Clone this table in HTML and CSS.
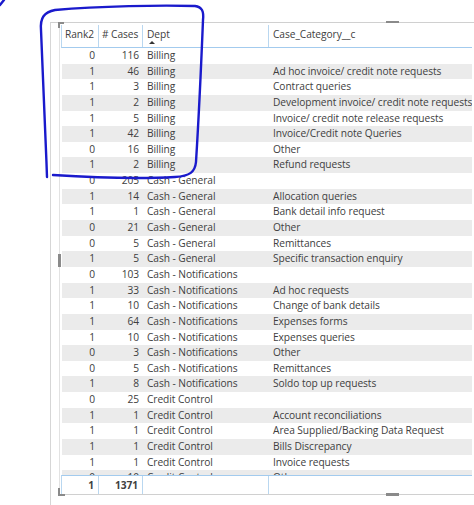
FILE: index.html
```html
<!DOCTYPE html>
<html>
<head>
<meta charset="utf-8">
<link rel="stylesheet" href="styles.css">
</head>
<body>
<div class="page">
  <div class="frame">
    <div class="visual">
      <span class="handle handle-tl"></span>
      <span class="handle handle-bl"></span>
      <span class="handle handle-ml"></span>
      <span class="handle handle-tm"></span>
      <span class="handle handle-bm"></span>
      <div class="table">
        <div class="row head">
          <div class="cell num">Rank2</div>
          <div class="cell num"># Cases</div>
          <div class="cell txt">Dept<span class="sort"></span></div>
          <div class="cell txt">Case_Category__c</div>
        </div>
        <div class="body">
          <div class="row"><div class="cell num">0</div><div class="cell num">116</div><div class="cell txt">Billing</div><div class="cell txt"></div></div>
          <div class="row alt"><div class="cell num">1</div><div class="cell num">46</div><div class="cell txt">Billing</div><div class="cell txt">Ad hoc invoice/ credit note requests</div></div>
          <div class="row"><div class="cell num">1</div><div class="cell num">3</div><div class="cell txt">Billing</div><div class="cell txt">Contract queries</div></div>
          <div class="row alt"><div class="cell num">1</div><div class="cell num">2</div><div class="cell txt">Billing</div><div class="cell txt">Development invoice/ credit note requests</div></div>
          <div class="row"><div class="cell num">1</div><div class="cell num">5</div><div class="cell txt">Billing</div><div class="cell txt">Invoice/ credit note release requests</div></div>
          <div class="row alt"><div class="cell num">1</div><div class="cell num">42</div><div class="cell txt">Billing</div><div class="cell txt">Invoice/Credit note Queries</div></div>
          <div class="row"><div class="cell num">0</div><div class="cell num">16</div><div class="cell txt">Billing</div><div class="cell txt">Other</div></div>
          <div class="row alt"><div class="cell num">1</div><div class="cell num">2</div><div class="cell txt">Billing</div><div class="cell txt">Refund requests</div></div>
          <div class="row"><div class="cell num">0</div><div class="cell num">205</div><div class="cell txt">Cash - General</div><div class="cell txt"></div></div>
          <div class="row alt"><div class="cell num">1</div><div class="cell num">14</div><div class="cell txt">Cash - General</div><div class="cell txt">Allocation queries</div></div>
          <div class="row"><div class="cell num">1</div><div class="cell num">1</div><div class="cell txt">Cash - General</div><div class="cell txt">Bank detail info request</div></div>
          <div class="row alt"><div class="cell num">0</div><div class="cell num">21</div><div class="cell txt">Cash - General</div><div class="cell txt">Other</div></div>
          <div class="row"><div class="cell num">0</div><div class="cell num">5</div><div class="cell txt">Cash - General</div><div class="cell txt">Remittances</div></div>
          <div class="row alt"><div class="cell num">1</div><div class="cell num">5</div><div class="cell txt">Cash - General</div><div class="cell txt">Specific transaction enquiry</div></div>
          <div class="row"><div class="cell num">0</div><div class="cell num">103</div><div class="cell txt">Cash - Notifications</div><div class="cell txt"></div></div>
          <div class="row alt"><div class="cell num">1</div><div class="cell num">33</div><div class="cell txt">Cash - Notifications</div><div class="cell txt">Ad hoc requests</div></div>
          <div class="row"><div class="cell num">1</div><div class="cell num">10</div><div class="cell txt">Cash - Notifications</div><div class="cell txt">Change of bank details</div></div>
          <div class="row alt"><div class="cell num">1</div><div class="cell num">64</div><div class="cell txt">Cash - Notifications</div><div class="cell txt">Expenses forms</div></div>
          <div class="row"><div class="cell num">1</div><div class="cell num">10</div><div class="cell txt">Cash - Notifications</div><div class="cell txt">Expenses queries</div></div>
          <div class="row alt"><div class="cell num">0</div><div class="cell num">3</div><div class="cell txt">Cash - Notifications</div><div class="cell txt">Other</div></div>
          <div class="row"><div class="cell num">0</div><div class="cell num">5</div><div class="cell txt">Cash - Notifications</div><div class="cell txt">Remittances</div></div>
          <div class="row alt"><div class="cell num">1</div><div class="cell num">8</div><div class="cell txt">Cash - Notifications</div><div class="cell txt">Soldo top up requests</div></div>
          <div class="row"><div class="cell num">0</div><div class="cell num">25</div><div class="cell txt">Credit Control</div><div class="cell txt"></div></div>
          <div class="row alt"><div class="cell num">1</div><div class="cell num">1</div><div class="cell txt">Credit Control</div><div class="cell txt">Account reconciliations</div></div>
          <div class="row"><div class="cell num">1</div><div class="cell num">1</div><div class="cell txt">Credit Control</div><div class="cell txt">Area Supplied/Backing Data Request</div></div>
          <div class="row alt"><div class="cell num">1</div><div class="cell num">1</div><div class="cell txt">Credit Control</div><div class="cell txt">Bills Discrepancy</div></div>
          <div class="row"><div class="cell num">1</div><div class="cell num">1</div><div class="cell txt">Credit Control</div><div class="cell txt">Invoice requests</div></div>
          <div class="row alt"><div class="cell num">0</div><div class="cell num">10</div><div class="cell txt">Credit Control</div><div class="cell txt">Other</div></div>
        </div>
        <div class="row total">
          <div class="cell num">1</div>
          <div class="cell num">1371</div>
          <div class="cell txt"></div>
          <div class="cell txt"></div>
        </div>
      </div>
    </div>
  </div>
  <svg class="ink" width="474" height="505" viewBox="0 0 474 505">
    <path d="M0,5 L4,0" />
    <path d="M47,177 C45,120 42,60 41,30 C40,18 44,12 55,10 C100,6 160,5 195,6 C202,7 204,11 203,20 C201,70 198,130 196,162 C195,172 190,176 175,177 C140,179 100,178 53,175" />
  </svg>
</div>
</body>
</html>
```

FILE: styles.css
```css
html, body {
  margin: 0;
  padding: 0;
  background: #ffffff;
}

.page {
  position: relative;
  width: 474px;
  height: 505px;
  overflow: hidden;
  font-family: "Open Sans", "Noto Sans", sans-serif;
  font-size: 10.2px;
  letter-spacing: -0.06px;
  color: #404040;
}

.frame {
  margin: 22px 0 0 50px;
  height: 483px;
  border-left: 1px solid #d6d6d6;
  border-top: 1px solid #d0d0d0;
  width: 700px;
}

.visual {
  position: relative;
  margin-left: 8px;
  width: 664px;
  height: 472px;
  border-left: 1px solid #e2e2e2;
  border-bottom: 1px solid #d0d0d0;
  padding: 2px 0 0 2px;
  box-sizing: border-box;
}

.handle {
  position: absolute;
  background: #8a8a8a;
}
.handle-tl { left: -2px; top: -1px; width: 6px; height: 6px; background: linear-gradient(#8a8a8a, #8a8a8a) top/6px 2px no-repeat, linear-gradient(#8a8a8a, #8a8a8a) left/2px 6px no-repeat; }
.handle-bl { left: -2px; bottom: -2px; width: 7px; height: 8px; background: linear-gradient(#8a8a8a, #8a8a8a) bottom/7px 2px no-repeat, linear-gradient(#8a8a8a, #8a8a8a) left/2px 8px no-repeat; }
.handle-ml { left: -2px; top: 231px; width: 3px; height: 13px; }
.handle-tm { left: 326px; top: -2px; width: 13px; height: 2px; }
.handle-bm { left: 326px; bottom: -2px; width: 13px; height: 3px; }

.table {
  width: 410px;
  display: flex;
  flex-direction: column;
}

.row {
  display: grid;
  grid-template-columns: 37px 44px 126px 203px;
  height: 15.65px;
  line-height: 15.65px;
  white-space: nowrap;
  border-left: 1px solid transparent;
  margin-left: -1px;
}

.row.alt {
  background: #ebebeb;
}

.cell {
  overflow: hidden;
}
.cell.num {
  text-align: right;
  padding-right: 4px;
}
.cell.txt {
  padding-left: 4px;
}

.head {
  height: 22px;
  line-height: 19px;
  border-left-color: #b9d7f0;
  border-bottom: 1px solid #a3cbee;
}
.head .cell {
  position: relative;
  border-right: 1px solid #b9d7f0;
}
.head .cell:last-child {
  border-right: none;
}
.head .num {
  text-align: left;
  padding: 0 0 0 3px;
}

.sort {
  position: absolute;
  left: 6px;
  top: 16px;
  width: 0;
  height: 0;
  border-left: 3px solid transparent;
  border-right: 3px solid transparent;
  border-bottom: 3px solid #333;
}

.body {
  height: 427px;
  overflow: hidden;
}

.total {
  height: 18px;
  line-height: 18px;
  font-weight: 700;
  border-top: 1px solid #a3cbee;
  border-left-color: #b9d7f0;
}
.total .cell {
  border-right: 1px solid #b9d7f0;
}
.total .cell:last-child {
  border-right: none;
}

.ink {
  position: absolute;
  left: 0;
  top: 0;
  fill: none;
  stroke: #1a1acc;
  stroke-width: 2.4;
  stroke-linecap: round;
  stroke-linejoin: round;
}
```
